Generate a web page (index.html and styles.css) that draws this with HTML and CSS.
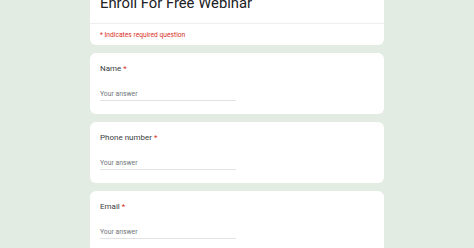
FILE: index.html
```html
<!DOCTYPE html>
<html>
<head>
<meta charset="utf-8">
<link rel="stylesheet" href="styles.css">
</head>
<body>
<div class="form">
  <div class="card head">
    <div class="title">Enroll For Free Webinar</div>
    <div class="req">* Indicates required question</div>
  </div>
  <div class="card q">
    <div class="label">Name <span class="star">*</span></div>
    <div class="answer">Your answer</div>
  </div>
  <div class="card q">
    <div class="label">Phone number <span class="star">*</span></div>
    <div class="answer">Your answer</div>
  </div>
  <div class="card q">
    <div class="label">Email <span class="star">*</span></div>
    <div class="answer">Your answer</div>
  </div>
</div>
</body>
</html>
```
FILE: styles.css
```css
html, body {
  margin: 0;
  padding: 0;
  background: #e3ece2;
  overflow: hidden;
}
body {
  font-family: Roboto, "Liberation Sans", sans-serif;
  color: #202124;
}
.form {
  width: 294px;
  margin: -29px 0 0 90px;
  display: flex;
  flex-direction: column;
  gap: 8px;
}
.card {
  background: #fff;
  border-radius: 6px;
}
.head .title {
  font-size: 14.8px;
  line-height: 24px;
  padding: 20px 10px 8px;
  border-bottom: 1px solid #eceef0;
}
.head .req {
  font-size: 6.7px;
  line-height: 10px;
  color: #d93025;
  padding: 6px 10px 5px;
}
.q {
  padding: 9px 10px 13px;
}
.label {
  font-size: 8px;
  line-height: 14px;
  color: #3c4043;
}
.star {
  color: #d93025;
}
.answer {
  margin-top: 12px;
  width: 136px;
  font-size: 6.8px;
  line-height: 12px;
  color: #70757a;
  border-bottom: 1px solid #e0e2e4;
}
```
